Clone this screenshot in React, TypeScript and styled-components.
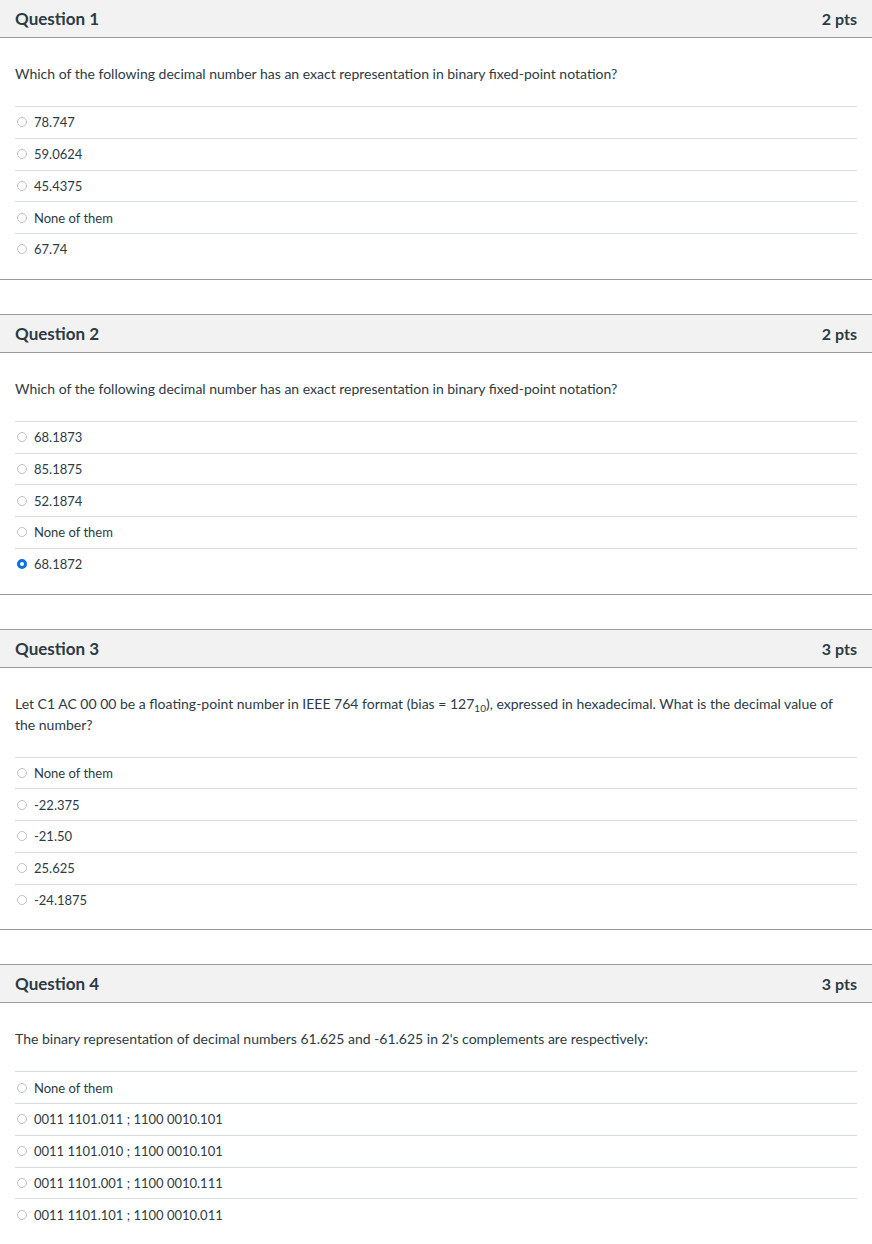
import React from "react";
import styled, { createGlobalStyle } from "styled-components";

const Global = createGlobalStyle`
  html, body { margin: 0; padding: 0; background: #ffffff; }
  body { font-family: Lato, "Noto Sans", sans-serif; color: #2d3b45; }
`;

const Page = styled.div`
  width: 872px;
  margin-top: -1px;
`;

const Block = styled.section`
  border-bottom: 1px solid #9b9b9b;
  margin-bottom: 34px;
`;

const Header = styled.header`
  height: 37px;
  box-sizing: content-box;
  background: #f2f2f2;
  border-top: 1px solid #9b9b9b;
  border-bottom: 1px solid #9b9b9b;
  display: flex;
  align-items: center;
  justify-content: space-between;
  padding: 0 15px;
`;

const Title = styled.h2`
  margin: 0;
  font-size: 17px;
  font-weight: 700;
  color: #2d3b45;
`;

const Points = styled.span`
  font-size: 16px;
  font-weight: 700;
  color: #2d3b45;
`;

const Body = styled.div`
  padding: 25px 15px 14px;
`;

const Prompt = styled.p`
  margin: 0;
  padding-right: 18px;
  font-size: 14px;
  line-height: 21px;
`;

const Answers = styled.ul`
  list-style: none;
  margin: 22px 0 0;
  padding: 0;
`;

const Answer = styled.li`
  height: 30.75px;
  border-top: 1px solid #d9dcde;
  display: flex;
  align-items: center;
  font-size: 13px;
`;

const Radio = styled.span<{ $checked?: boolean }>`
  width: 10px;
  height: 10px;
  box-sizing: border-box;
  border-radius: 50%;
  margin: 0 7px 0 2px;
  flex: none;
  background: #fff;
  border: ${(p) => (p.$checked ? "3px solid #0b6fe6" : "1px solid #c2c2c2")};
`;

const SubText = styled.sub`
  font-size: 10px;
  line-height: 0;
  vertical-align: -3px;
`;

type Q = {
  n: number;
  pts: number;
  text: React.ReactNode;
  answers: string[];
  checked?: number;
};

const questions: Q[] = [
  {
    n: 1,
    pts: 2,
    text: "Which of the following decimal number has an exact representation in binary fixed-point notation?",
    answers: ["78.747", "59.0624", "45.4375", "None of them", "67.74"],
  },
  {
    n: 2,
    pts: 2,
    text: "Which of the following decimal number has an exact representation in binary fixed-point notation?",
    answers: ["68.1873", "85.1875", "52.1874", "None of them", "68.1872"],
    checked: 4,
  },
  {
    n: 3,
    pts: 3,
    text: (
      <>
        Let C1 AC 00 00 be a floating-point number in IEEE 764 format (bias = 127<SubText>10</SubText>), expressed in
        hexadecimal. What is the decimal value of the number?
      </>
    ),
    answers: ["None of them", "-22.375", "-21.50", "25.625", "-24.1875"],
  },
  {
    n: 4,
    pts: 3,
    text: "The binary representation of decimal numbers 61.625 and -61.625 in 2's complements are respectively:",
    answers: [
      "None of them",
      "0011 1101.011 ; 1100 0010.101",
      "0011 1101.010 ; 1100 0010.101",
      "0011 1101.001 ; 1100 0010.111",
      "0011 1101.101 ; 1100 0010.011",
    ],
  },
];

export default function App() {
  return (
    <>
      <Global />
      <Page>
        {questions.map((q) => (
          <Block key={q.n}>
            <Header>
              <Title>Question {q.n}</Title>
              <Points>{q.pts} pts</Points>
            </Header>
            <Body>
              <Prompt>{q.text}</Prompt>
              <Answers>
                {q.answers.map((a, i) => (
                  <Answer key={i}>
                    <Radio $checked={q.checked === i} />
                    {a}
                  </Answer>
                ))}
              </Answers>
            </Body>
          </Block>
        ))}
      </Page>
    </>
  );
}
